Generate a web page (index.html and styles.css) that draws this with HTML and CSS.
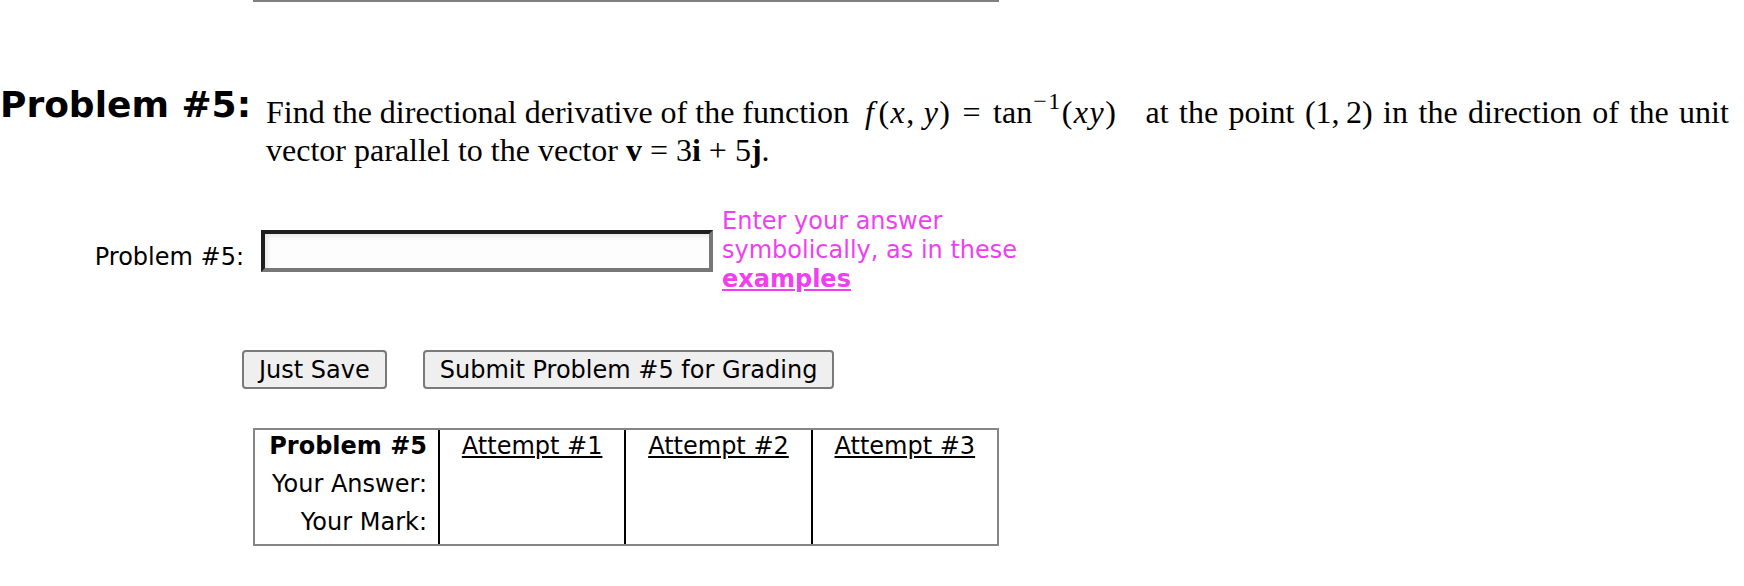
FILE: index.html
```html
<!DOCTYPE html>
<html lang="en">
<head>
<meta charset="utf-8">
<title>Problem #5</title>
<link rel="stylesheet" href="styles.css">
</head>
<body>
<div class="prev-rule"></div>

<div class="problem">
  <h2 class="pnum">Problem #5:</h2>
  <div class="stmt">
    Find the directional derivative of the function <span class="math"><i class="f">f</i>(<i>x</i>,&thinsp;<i>y</i>)<span class="op">=</span><span class="fn">tan</span><sup>−1</sup>(<i>xy</i>)</span><span class="gap"></span><span class="wide">at the point (1,&thinsp;2) in the direction of the unit</span><br>
    vector parallel to the vector <b>v</b> = 3<b>i</b> + 5<b>j</b>.
  </div>
</div>

<div class="answer-row">
  <label class="alabel" for="ans5">Problem #5:</label>
  <input class="ainput" id="ans5" type="text">
  <div class="hint">Enter your answer symbolically, as in these <a href="#" class="hint-link">examples</a></div>
</div>

<div class="buttons">
  <button class="btn" type="button">Just Save</button>
  <button class="btn" type="button">Submit Problem #5 for Grading</button>
</div>

<table class="attempts">
  <colgroup><col class="c1"><col><col><col></colgroup>
  <tr>
    <th class="rowhead">Problem #5</th>
    <td class="att"><a href="#">Attempt #1</a></td>
    <td class="att"><a href="#">Attempt #2</a></td>
    <td class="att"><a href="#">Attempt #3</a></td>
  </tr>
  <tr>
    <td class="rowlabel">Your Answer:</td>
    <td class="att"></td>
    <td class="att"></td>
    <td class="att"></td>
  </tr>
  <tr>
    <td class="rowlabel">Your Mark:</td>
    <td class="att"></td>
    <td class="att"></td>
    <td class="att"></td>
  </tr>
</table>
</body>
</html>
```

FILE: styles.css
```css
html, body {
  margin: 0;
  padding: 0;
  background: #ffffff;
  color: #000000;
  font-family: "DejaVu Sans", Verdana, sans-serif;
  font-size: 24px;
}

.prev-rule {
  margin-left: 253px;
  width: 746px;
  border-top: 2px solid #808080;
}

.problem {
  display: flex;
  align-items: flex-start;
  column-gap: 15px;
  margin-top: 82px;
}

.pnum {
  margin: 0;
  font-family: "DejaVu Sans", Verdana, sans-serif;
  font-weight: bold;
  font-size: 36px;
  line-height: 42px;
  white-space: nowrap;
}

.stmt {
  margin-top: 9px;
  font-family: "Liberation Serif", "Times New Roman", serif;
  font-size: 32px;
  line-height: 38px;
  white-space: nowrap;
}

.stmt b {
  font-weight: bold;
}

.math {
  padding-left: 8px;
  letter-spacing: 1.5px;
}

.math i {
  font-style: italic;
}

.math .f {
  margin-right: 3px;
}

.math .fn {
  letter-spacing: 0;
}

.op {
  margin: 0 11px;
}

.math sup {
  font-size: 0.75em;
  line-height: 0;
  vertical-align: 0.6em;
  margin-left: 1px;
}

.gap {
  display: inline-block;
  width: 28px;
}

.wide {
  word-spacing: 2.5px;
}

.answer-row {
  display: flex;
  align-items: center;
  margin-top: 38px;
}

.alabel {
  width: 244px;
  box-sizing: border-box;
  padding-top: 12px;
  text-align: right;
  line-height: 28px;
}

.ainput {
  margin: 0 9px 0 17px;
  width: 452px;
  height: 42px;
  box-sizing: border-box;
  border-style: solid;
  border-width: 4px;
  border-color: #1e1e1e #777777 #777777 #1e1e1e;
  background: #fdfdfd;
  box-shadow: inset 3px 3px 4px rgba(0, 0, 0, 0.08);
  font-family: "DejaVu Sans", Verdana, sans-serif;
  font-size: 24px;
  padding: 0 4px;
}

.hint {
  width: 310px;
  color: #ef3ff0;
  line-height: 29px;
}

.hint-link {
  color: #ef3ff0;
  font-weight: bold;
  text-decoration: underline;
}

.buttons {
  display: flex;
  column-gap: 36px;
  margin: 56px 0 0 242px;
}

.btn {
  font-family: "DejaVu Sans", Verdana, sans-serif;
  font-size: 24px;
  line-height: 28px;
  color: #000000;
  background: #efefef;
  border: 2px solid #7a7a7a;
  border-radius: 4px;
  padding: 3.5px 15px;
}

.attempts {
  margin: 39px 0 0 253px;
  width: 746px;
  table-layout: fixed;
  border: 2px solid #858585;
  border-spacing: 0;
}

.attempts .c1 {
  width: 183px;
}

.attempts th,
.attempts td {
  padding: 2px 11px 8px 8px;
  line-height: 28px;
  height: 28px;
  font-size: 24px;
}

.rowhead {
  text-align: right;
  font-weight: bold;
}

.rowlabel {
  text-align: right;
}

.attempts .att {
  text-align: center;
  border-left: 2px solid #000000;
  padding-left: 8px;
  padding-right: 8px;
}

.att a {
  color: #000000;
  text-decoration: underline;
}
```
